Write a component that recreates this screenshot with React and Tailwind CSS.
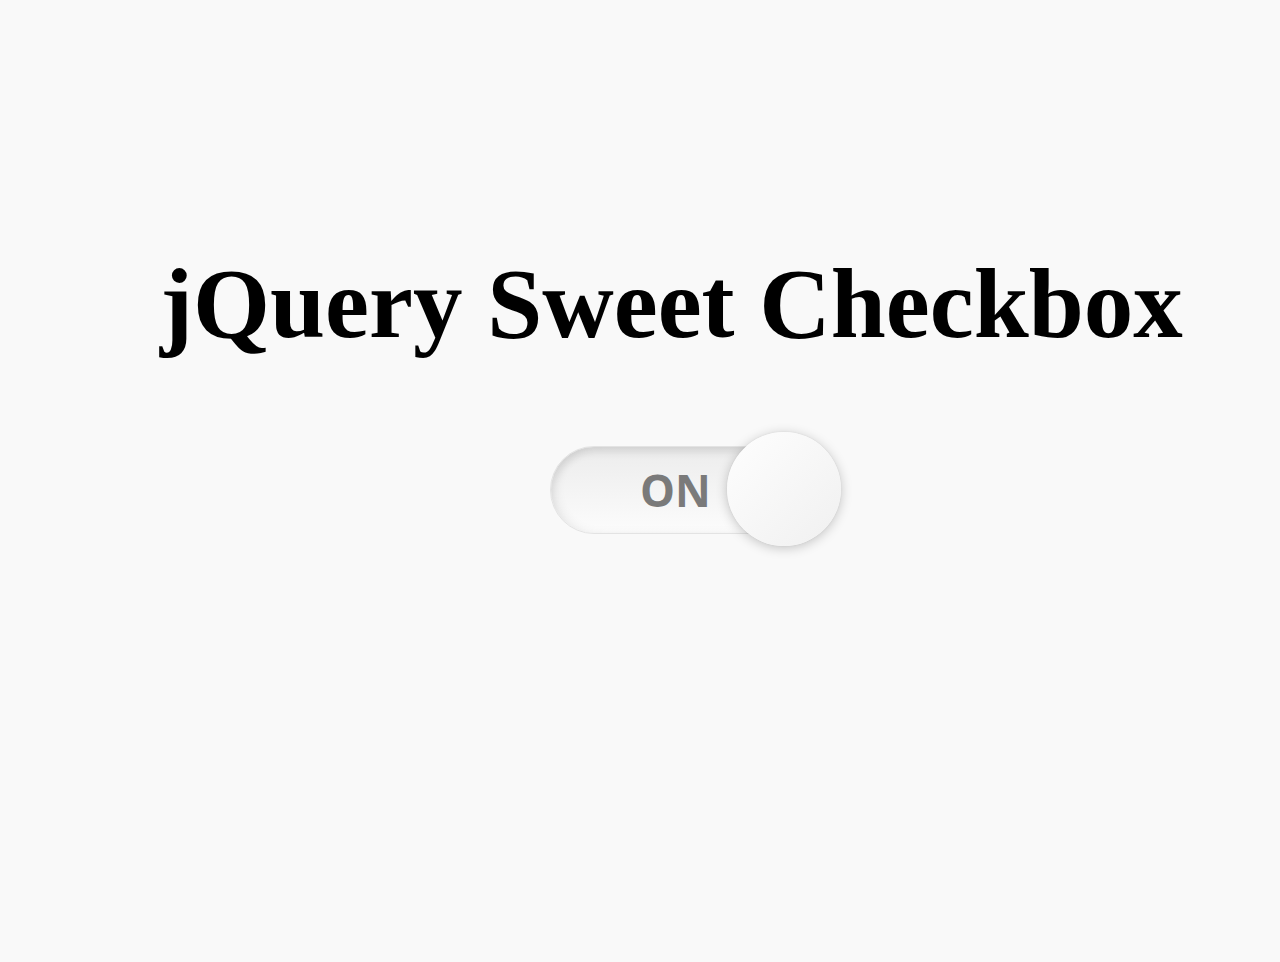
export default function App() {
  return (
    <div className="min-h-[962px] w-full bg-[#f9f9f9]">
      <div className="pt-[244px] pl-[160px]">
        <h1 className="m-0 whitespace-nowrap text-[99px] font-bold leading-[120px] text-black" style={{ fontFamily: '"Liberation Serif", "Times New Roman", serif' }}>
          jQuery Sweet Checkbox
        </h1>
      </div>
      <div className="mt-[82px] ml-[550px]">
        <div className="relative h-[88px] w-[260px]">
          <div className="flex h-[88px] w-[250px] items-center rounded-full border border-[#e3e3e3] bg-gradient-to-b from-[#ececec] to-[#fcfcfc] pl-[89px] shadow-[inset_0_5px_9px_rgba(0,0,0,0.09),inset_6px_0_10px_rgba(0,0,0,0.05)]">
            <span className="text-[44px] font-bold leading-none text-[#7a7a7a]" style={{ fontFamily: '"Open Sans", "Noto Sans", sans-serif' }}>ON</span>
          </div>
          <div className="absolute left-[177px] top-[-14px] h-[114px] w-[114px] rounded-full bg-gradient-to-br from-[#fefefe] to-[#f0f0f0] shadow-[0_2px_12px_rgba(0,0,0,0.22),0_0_2px_rgba(0,0,0,0.08)]"></div>
        </div>
      </div>
    </div>
  );
}
